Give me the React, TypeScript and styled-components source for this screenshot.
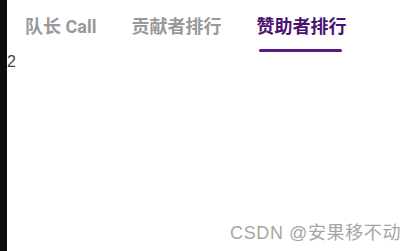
import React from "react";
import styled, { createGlobalStyle } from "styled-components";

const Global = createGlobalStyle`
  html, body { margin: 0; padding: 0; background: #fff; }
  body { font-family: "Liberation Sans", "Noto Sans CJK SC", sans-serif; }
`;

const Page = styled.div`
  position: relative;
  display: flex;
  width: 416px;
  height: 251px;
  overflow: hidden;
`;

const SideBar = styled.div`
  width: 7px;
  flex: none;
  background: #0d0d0d;
`;

const Main = styled.div`
  flex: 1;
  display: flex;
  flex-direction: column;
`;

const Tabs = styled.div`
  display: flex;
  gap: 35px;
  padding: 15px 0 0 18px;
  height: 38px;
`;

const Tab = styled.div<{ $active?: boolean }>`
  position: relative;
  font-family: Roboto, "Noto Sans CJK SC", sans-serif;
  font-size: 18px;
  font-weight: 700;
  line-height: 24px;
  color: ${(p) => (p.$active ? "#4a1270" : "#999999")};
  white-space: nowrap;
`;

const Underline = styled.div`
  position: absolute;
  left: 3px;
  right: 4px;
  top: 34px;
  height: 3px;
  border-radius: 2px;
  background: #551a86;
`;

const Content = styled.div`
  font-family: "Liberation Sans", sans-serif;
  font-size: 16px;
  line-height: 18px;
  color: #444;
`;

const Watermark = styled.div`
  position: absolute;
  right: 15px;
  bottom: 7px;
  font-family: "Liberation Sans", "Noto Sans CJK SC", sans-serif;
  font-size: 18px;
  letter-spacing: 0.6px;
  color: #a6a6a6;
  white-space: nowrap;
`;

export default function App() {
  return (
    <Page>
      <Global />
      <SideBar />
      <Main>
        <Tabs>
          <Tab>队长 Call</Tab>
          <Tab>贡献者排行</Tab>
          <Tab $active>
            赞助者排行
            <Underline />
          </Tab>
        </Tabs>
        <Content>2</Content>
      </Main>
      <Watermark>CSDN @安果移不动</Watermark>
    </Page>
  );
}
